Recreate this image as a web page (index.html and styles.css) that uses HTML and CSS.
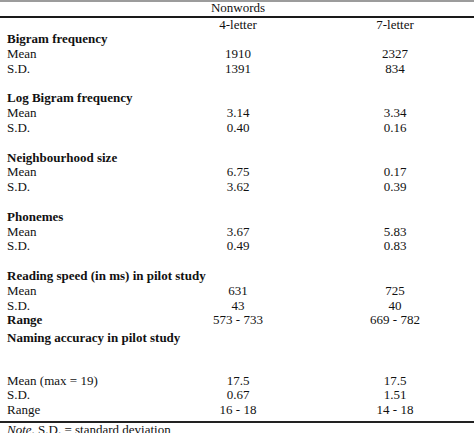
FILE: index.html
```html
<!DOCTYPE html>
<html>
<head>
<meta charset="utf-8">
<link rel="stylesheet" href="styles.css">
</head>
<body>
<div class="band"></div>
<div class="head"><span class="nonwords">Nonwords</span></div>
<div class="rule-top"></div>
<div class="body">
  <div class="row"><span></span><span class="num">4-letter</span><span class="num">7-letter</span></div>
  <div class="row"><span class="lab b">Bigram frequency</span></div>
  <div class="row"><span class="lab">Mean</span><span class="num">1910</span><span class="num">2327</span></div>
  <div class="row"><span class="lab">S.D.</span><span class="num">1391</span><span class="num">834</span></div>
  <div class="row"></div>
  <div class="row"><span class="lab b">Log Bigram frequency</span></div>
  <div class="row"><span class="lab">Mean</span><span class="num">3.14</span><span class="num">3.34</span></div>
  <div class="row"><span class="lab">S.D.</span><span class="num">0.40</span><span class="num">0.16</span></div>
  <div class="row"></div>
  <div class="row"><span class="lab b">Neighbourhood size</span></div>
  <div class="row"><span class="lab">Mean</span><span class="num">6.75</span><span class="num">0.17</span></div>
  <div class="row"><span class="lab">S.D.</span><span class="num">3.62</span><span class="num">0.39</span></div>
  <div class="row"></div>
  <div class="row"><span class="lab b">Phonemes</span></div>
  <div class="row"><span class="lab">Mean</span><span class="num">3.67</span><span class="num">5.83</span></div>
  <div class="row"><span class="lab">S.D.</span><span class="num">0.49</span><span class="num">0.83</span></div>
  <div class="row"></div>
  <div class="row"><span class="lab b">Reading speed (in ms) in pilot study</span></div>
  <div class="row"><span class="lab">Mean</span><span class="num">631</span><span class="num">725</span></div>
  <div class="row"><span class="lab">S.D.</span><span class="num">43</span><span class="num">40</span></div>
  <div class="row"><span class="lab b">Range</span><span class="num">573 - 733</span><span class="num">669 - 782</span></div>
  <div class="row gap-top"><span class="lab b">Naming accuracy in pilot study</span></div>
  <div class="row tall"></div>
  <div class="row"><span class="lab">Mean (max = 19)</span><span class="num">17.5</span><span class="num">17.5</span></div>
  <div class="row"><span class="lab">S.D.</span><span class="num">0.67</span><span class="num">1.51</span></div>
  <div class="row"><span class="lab">Range</span><span class="num">16 - 18</span><span class="num">14 - 18</span></div>
</div>
<div class="rule-bottom"></div>
<div class="note"><i>Note</i>. S.D. = standard deviation</div>
</body>
</html>
```
FILE: styles.css
```css
html, body {
  margin: 0;
  padding: 0;
  background: #fff;
}
body {
  width: 474px;
  height: 433px;
  overflow: hidden;
  font-family: "Liberation Serif", "Times New Roman", serif;
  font-size: 13px;
  color: #111;
}
.band {
  height: 2px;
  background: #9c9c9c;
}
.head {
  height: 14px;
  line-height: 12px;
  display: grid;
  grid-template-columns: 160px 314px;
}
.nonwords {
  grid-column: 2;
  width: 156px;
  margin-left: 0;
  text-align: center;
}
.rule-top {
  height: 1.5px;
  background: #1a1a1a;
}
.body {
  display: flex;
  flex-direction: column;
}
.row {
  display: grid;
  grid-template-columns: 160px 156px 158px;
  height: 14.8px;
  line-height: 14.8px;
  white-space: nowrap;
}
.row.gap-top {
  margin-top: 3px;
}
.row.tall {
  height: 27.6px;
}
.lab {
  padding-left: 7px;
  grid-column: 1;
}
.b {
  font-weight: bold;
}
.num {
  text-align: center;
}
.row > .num:nth-child(2) {
  grid-column: 2;
}
.row > .num:nth-child(3) {
  grid-column: 3;
}
.rule-bottom {
  margin-top: 3px;
  height: 2px;
  background: #222;
}
.note {
  padding-left: 7px;
  line-height: 14.8px;
}
```
